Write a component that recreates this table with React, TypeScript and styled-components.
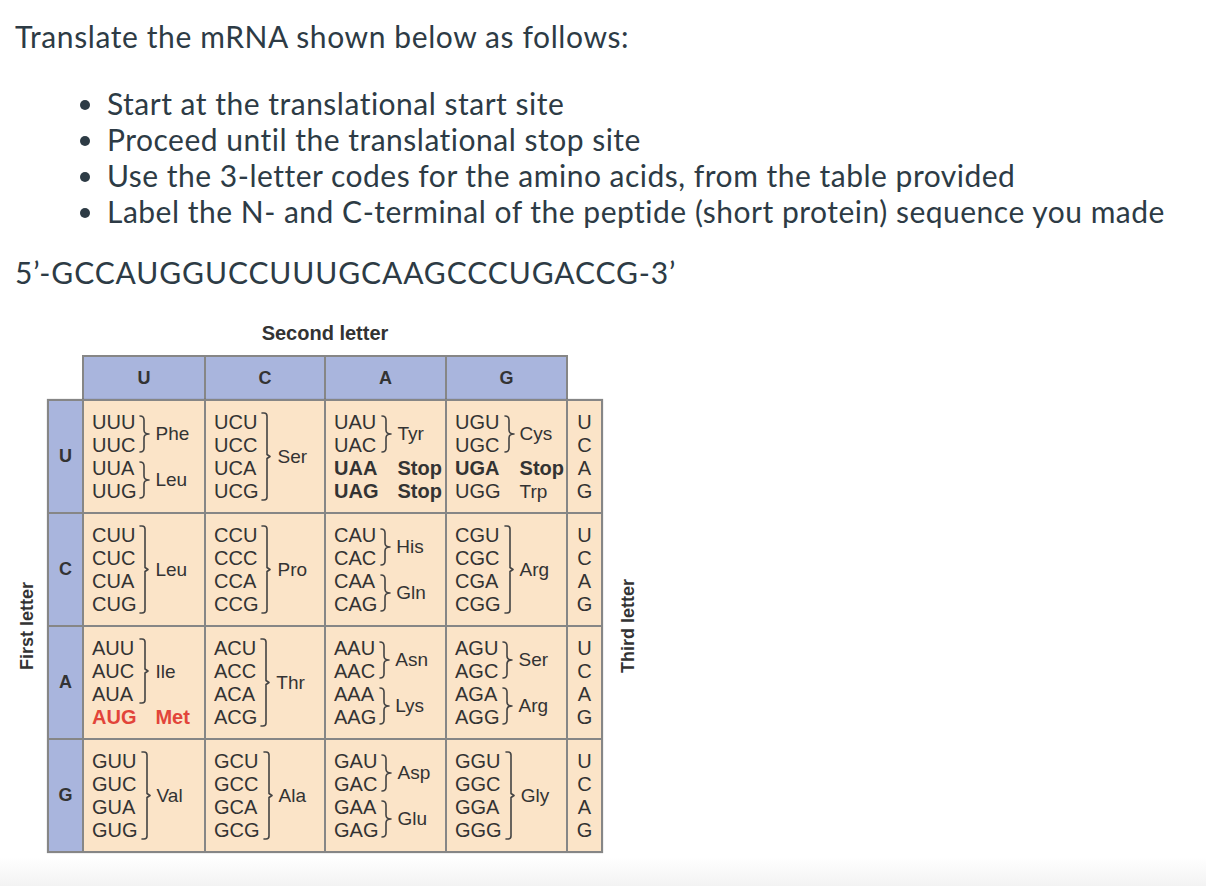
import React from 'react';
import styled, { createGlobalStyle } from 'styled-components';

const GlobalStyle = createGlobalStyle`
  *, *::before, *::after { box-sizing: border-box; }
  html, body { margin: 0; padding: 0; background: #fff; }
  body { font-family: Lato, "Open Sans", sans-serif; color: #2d3b45; }
`;

const Page = styled.div`
  width: 1206px;
  height: 886px;
  overflow: hidden;
  display: flex;
  flex-direction: column;
`;

const Content = styled.div`
  flex: 1;
  padding: 18px 0 0 15px;
`;

const Prompt = styled.p`
  margin: 0;
  font-size: 30px;
  letter-spacing: 0.6px;
  line-height: 36px;
`;

const Steps = styled.ul`
  margin: 31px 0 0;
  padding-left: 92px;
  font-size: 30px;
  letter-spacing: 0.5px;
  line-height: 36px;
`;

const Sequence = styled.p`
  margin: 25px 0 0;
  font-size: 30px;
  letter-spacing: 0.9px;
  line-height: 36px;
`;

const Chart = styled.div`
  margin-top: 31px;
  font-family: "Liberation Sans", Arial, sans-serif;
  color: #333;
`;

const Caption = styled.div`
  margin-left: 67px;
  width: 486px;
  text-align: center;
  font-weight: bold;
  font-size: 20px;
  line-height: 24px;
  margin-bottom: 10px;
`;

const HeadRow = styled.div`
  display: grid;
  grid-template-columns: 120px 118px 119px 119px;
  grid-template-rows: 42px;
  gap: 2px;
  padding: 2px 2px 0;
  width: fit-content;
  margin-left: 67px;
  background: #868686;
`;

const HeadCell = styled.div`
  background: #a9b5dd;
  display: flex;
  align-items: center;
  justify-content: center;
  font-weight: bold;
  font-size: 18px;
`;

const BodyRow = styled.div`
  display: flex;
`;

const LeftRail = styled.div`
  width: 32px;
  padding-right: 8px;
  display: flex;
  align-items: center;
  justify-content: center;
`;

const RightRail = styled.div`
  width: 50px;
  display: flex;
  align-items: center;
  justify-content: center;
`;

const AxisLabel = styled.div`
  writing-mode: vertical-rl;
  transform: rotate(180deg);
  font-weight: bold;
  font-size: 18px;
  white-space: nowrap;
`;

const Board = styled.div`
  display: grid;
  grid-template-columns: 33px 120px 118px 119px 119px 33px;
  grid-template-rows: repeat(4, 111px);
  gap: 2px;
  padding: 2px;
  background: #868686;
  box-shadow: 0 0 1px rgba(0, 0, 0, 0.35);
`;

const FirstCell = styled.div`
  background: #a9b5dd;
  display: flex;
  align-items: center;
  justify-content: center;
  font-weight: bold;
  font-size: 18px;
`;

const ThirdCell = styled.div`
  background: #fbe4c8;
  display: grid;
  grid-template-rows: repeat(4, 23px);
  align-content: center;
  justify-items: center;
  font-size: 20px;
  line-height: 23px;
`;

const Pocket = styled.div`
  background: #fbe4c8;
  display: grid;
  grid-template-columns: auto 19px auto;
  grid-template-rows: repeat(4, 23px);
  align-content: center;
  justify-content: start;
  padding-left: 8px;
  font-size: 20px;
  line-height: 23px;
`;

const Codon = styled.span<{ $row: number; $bold?: boolean; $red?: boolean }>`
  grid-column: 1;
  grid-row: ${p => p.$row};
  font-weight: ${p => (p.$bold ? 'bold' : 'normal')};
  color: ${p => (p.$red ? '#e2443a' : 'inherit')};
`;

const Mark = styled.span<{ $row: number; $span: number }>`
  grid-column: 2;
  grid-row: ${p => p.$row} / span ${p => p.$span};
  display: flex;
  align-items: center;
  padding-left: 3px;
  color: #444;
`;

const Amino = styled.span<{ $row: number; $span: number; $bold?: boolean; $red?: boolean }>`
  grid-column: 3;
  grid-row: ${p => p.$row} / span ${p => p.$span};
  align-self: center;
  font-size: ${p => (p.$bold ? '20px' : '19px')};
  font-weight: ${p => (p.$bold ? 'bold' : 'normal')};
  color: ${p => (p.$red ? '#e2443a' : 'inherit')};
`;

const Footer = styled.div`
  height: 29px;
  background: linear-gradient(#ffffff, #f3f3f3);
`;

type Group = {
  c: string[];
  aa: string;
  k?: 'brace' | 'bracket';
  bold?: boolean;
  red?: boolean;
};

const brace = (c: string[], aa: string): Group => ({ c, aa, k: 'brace' });
const bracket = (c: string[], aa: string): Group => ({ c, aa, k: 'bracket' });

const BASES = ['U', 'C', 'A', 'G'];

const TABLE: Group[][][] = [
  [
    [brace(['UUU', 'UUC'], 'Phe'), brace(['UUA', 'UUG'], 'Leu')],
    [bracket(['UCU', 'UCC', 'UCA', 'UCG'], 'Ser')],
    [brace(['UAU', 'UAC'], 'Tyr'), { c: ['UAA'], aa: 'Stop', bold: true }, { c: ['UAG'], aa: 'Stop', bold: true }],
    [brace(['UGU', 'UGC'], 'Cys'), { c: ['UGA'], aa: 'Stop', bold: true }, { c: ['UGG'], aa: 'Trp' }],
  ],
  [
    [bracket(['CUU', 'CUC', 'CUA', 'CUG'], 'Leu')],
    [bracket(['CCU', 'CCC', 'CCA', 'CCG'], 'Pro')],
    [brace(['CAU', 'CAC'], 'His'), brace(['CAA', 'CAG'], 'Gln')],
    [bracket(['CGU', 'CGC', 'CGA', 'CGG'], 'Arg')],
  ],
  [
    [bracket(['AUU', 'AUC', 'AUA'], 'Ile'), { c: ['AUG'], aa: 'Met', bold: true, red: true }],
    [bracket(['ACU', 'ACC', 'ACA', 'ACG'], 'Thr')],
    [brace(['AAU', 'AAC'], 'Asn'), brace(['AAA', 'AAG'], 'Lys')],
    [brace(['AGU', 'AGC'], 'Ser'), brace(['AGA', 'AGG'], 'Arg')],
  ],
  [
    [bracket(['GUU', 'GUC', 'GUA', 'GUG'], 'Val')],
    [bracket(['GCU', 'GCC', 'GCA', 'GCG'], 'Ala')],
    [brace(['GAU', 'GAC'], 'Asp'), brace(['GAA', 'GAG'], 'Glu')],
    [bracket(['GGU', 'GGC', 'GGA', 'GGG'], 'Gly')],
  ],
];

function Brace({ kind, span }: { kind: 'brace' | 'bracket'; span: number }) {
  const h = kind === 'brace' ? 38 : span * 23 - 3;
  const m = h / 2;
  const d =
    kind === 'brace'
      ? `M1 1 Q5 1 5 5 V${m - 4} Q5 ${m} 10 ${m} Q5 ${m} 5 ${m + 4} V${h - 5} Q5 ${h - 1} 1 ${h - 1}`
      : `M1 1 H3 Q6 1 6 4 V${m - 2} L9 ${m} L6 ${m + 2} V${h - 4} Q6 ${h - 1} 3 ${h - 1} H1`;
  return (
    <svg width="12" height={h} viewBox={`0 0 12 ${h}`}>
      <path d={d} fill="none" stroke="currentColor" strokeWidth="1.6" strokeLinecap="round" strokeLinejoin="round" />
    </svg>
  );
}

function CodonCell({ groups }: { groups: Group[] }) {
  let row = 1;
  const parts: React.ReactNode[] = [];
  groups.forEach((g, gi) => {
    const start = row;
    g.c.forEach((codon, i) => {
      parts.push(
        <Codon key={codon} $row={start + i} $bold={g.bold} $red={g.red}>
          {codon}
        </Codon>
      );
    });
    if (g.k) {
      parts.push(
        <Mark key={`m${gi}`} $row={start} $span={g.c.length}>
          <Brace kind={g.k} span={g.c.length} />
        </Mark>
      );
    }
    parts.push(
      <Amino key={`a${gi}`} $row={start} $span={g.c.length} $bold={g.bold} $red={g.red}>
        {g.aa}
      </Amino>
    );
    row += g.c.length;
  });
  return <Pocket>{parts}</Pocket>;
}

export default function App() {
  return (
    <Page>
      <GlobalStyle />
      <Content>
        <Prompt>Translate the mRNA shown below as follows:</Prompt>
        <Steps>
          <li>Start at the translational start site</li>
          <li>Proceed until the translational stop site</li>
          <li>Use the 3-letter codes for the amino acids, from the table provided</li>
          <li>Label the N- and C-terminal of the peptide (short protein) sequence you made</li>
        </Steps>
        <Sequence>5’-GCCAUGGUCCUUUGCAAGCCCUGACCG-3’</Sequence>

        <Chart>
          <Caption>Second letter</Caption>
          <HeadRow>
            {BASES.map(b => (
              <HeadCell key={b}>{b}</HeadCell>
            ))}
          </HeadRow>
          <BodyRow>
            <LeftRail>
              <AxisLabel>First letter</AxisLabel>
            </LeftRail>
            <Board>
              {TABLE.map((cells, ri) => (
                <React.Fragment key={BASES[ri]}>
                  <FirstCell>{BASES[ri]}</FirstCell>
                  {cells.map((groups, ci) => (
                    <CodonCell key={ci} groups={groups} />
                  ))}
                  <ThirdCell>
                    {BASES.map(b => (
                      <span key={b}>{b}</span>
                    ))}
                  </ThirdCell>
                </React.Fragment>
              ))}
            </Board>
            <RightRail>
              <AxisLabel>Third letter</AxisLabel>
            </RightRail>
          </BodyRow>
        </Chart>
      </Content>
      <Footer />
    </Page>
  );
}
